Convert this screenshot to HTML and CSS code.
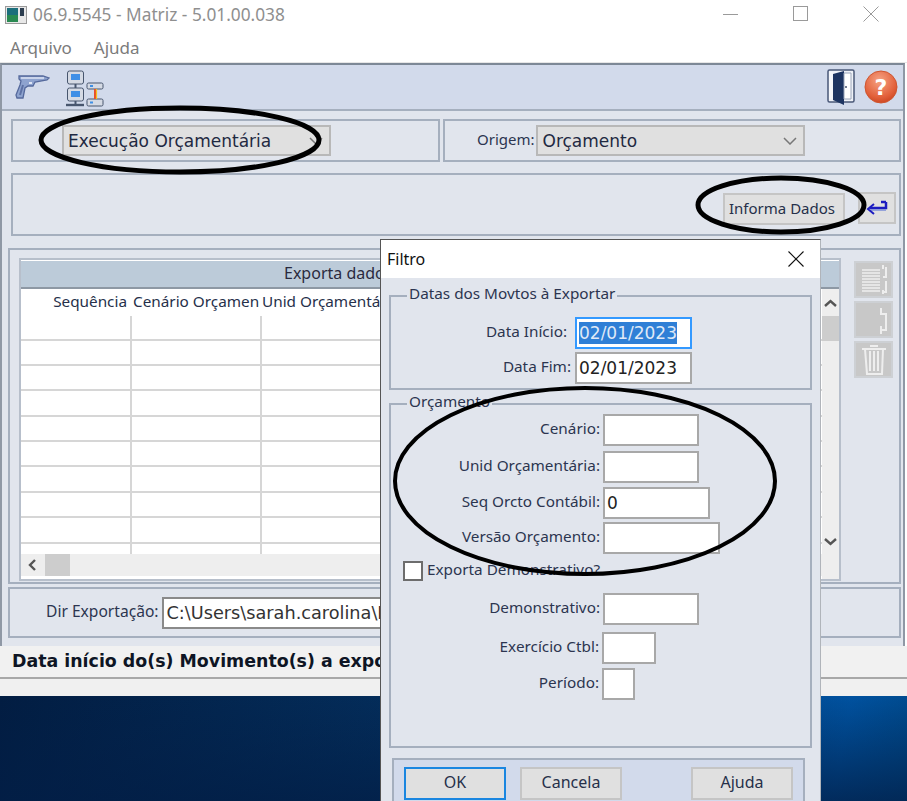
FILE: index.html
```html
<!DOCTYPE html>
<html lang="pt">
<head>
<meta charset="utf-8">
<title>Matriz</title>
<link rel="stylesheet" href="styles.css">
</head>
<body>
<div class="page">
  <header class="titlebar">
    <svg class="app-icon" width="22" height="18" viewBox="0 0 22 18"><rect x="0.5" y="0.5" width="21" height="17" fill="#e8e8e8" stroke="#9a9a9a"/><rect x="2" y="2" width="11" height="14" fill="#1c6f7c"/><rect x="2" y="9" width="11" height="7" fill="#2a8a52"/><rect x="15" y="2" width="4" height="8" fill="#2d3e50"/></svg>
    <span class="title-text">06.9.5545 - Matriz - 5.01.00.038</span>
    <div class="win-controls">
      <svg width="16" height="16" viewBox="0 0 16 16"><path d="M0 8.5H15" stroke="#9a9a9a"/></svg>
      <svg width="16" height="16" viewBox="0 0 16 16"><rect x="0.5" y="0.5" width="14" height="14" fill="none" stroke="#9a9a9a"/></svg>
      <svg width="16" height="16" viewBox="0 0 16 16"><path d="M0.5 0.5L15.5 15.5M15.5 0.5L0.5 15.5" stroke="#9a9a9a"/></svg>
    </div>
  </header>
  <nav class="menubar"><span>Arquivo</span><span>Ajuda</span></nav>

  <main class="window">
    <div class="toolbar">
      <svg width="36" height="28" viewBox="0 0 36 28"><path d="M4 3H28L34 5L32 7L20 9L18 13H13L10 15L8 25H2L1 22L5 12L6 8L4 6Z" fill="#8ea3cf" stroke="#55699c" stroke-width="1.3"/><path d="M6 5H29" stroke="#e4eaf6" stroke-width="1.4"/><path d="M5 22L8 12" stroke="#5d71a4" stroke-width="2"/><rect x="14" y="9" width="3" height="2" fill="#dfe6f5"/></svg>
      <svg class="net-icon" width="38" height="37" viewBox="0 0 38 37"><g fill="#d5dae4" stroke="#48566e"><rect x="1.5" y="1" width="16" height="13" rx="2"/><rect x="1.5" y="18" width="16" height="13" rx="2"/><rect x="21" y="13" width="16" height="6" rx="1.5"/><rect x="21" y="29" width="16" height="7" rx="1.5"/></g><rect x="5" y="4" width="9" height="6" fill="#3f8fe6"/><rect x="5" y="21" width="9" height="6" fill="#3f8fe6"/><path d="M9.5 14V18M9.5 31V34" stroke="#48566e" stroke-width="2"/><path d="M0 35H18" stroke="#48566e" stroke-width="2.4"/><path d="M29 19V29" stroke="#e8502a" stroke-width="2"/><path d="M30.5 19V29" stroke="#f5c020" stroke-width="1.2"/><path d="M24 16H27M24 32.500H27" stroke="#3f8fe6" stroke-width="2"/></svg>
      <div class="toolbar-spacer"></div>
      <svg width="29" height="37" viewBox="0 0 29 37"><rect x="1" y="1" width="26" height="32" rx="1.500" fill="#eef1f7" stroke="#4a5878" stroke-width="1.500"/><path d="M6 5L17 2V36L6 31Z" fill="#1d3461"/><path d="M17 4H24V30H17Z" fill="#fff" stroke="#9aa5ba"/><path d="M2 3H6V30H2Z" fill="#f4f6fa"/><circle cx="19" cy="18" r="1" fill="#44506a"/></svg>
      <svg class="help-icon" width="34" height="34" viewBox="0 0 34 34"><defs><radialGradient id="helpfill" cx="45%" cy="30%" r="75%"><stop offset="0" stop-color="#f6a384"/><stop offset="0.7" stop-color="#e2603a"/><stop offset="1" stop-color="#c8421f"/></radialGradient></defs><circle cx="17" cy="17" r="16" fill="url(#helpfill)" stroke="#cf5630"/><text x="17" y="25" class="help-mark" text-anchor="middle">?</text></svg>
    </div>

    <div class="content">
      <div class="row-top">
        <section class="panel panel-kind">
          <div class="combo combo-kind"><span>Execução Orçamentária</span><svg class="chev" width="14" height="8" viewBox="0 0 14 8"><path d="M1 1L7 7L13 1" fill="none" stroke="#777" stroke-width="1.500"/></svg></div>
        </section>
        <section class="panel panel-origin">
          <label class="lbl">Origem:</label>
          <div class="combo combo-origin"><span>Orçamento</span><svg class="chev" width="14" height="8" viewBox="0 0 14 8"><path d="M1 1L7 7L13 1" fill="none" stroke="#777" stroke-width="1.500"/></svg></div>
        </section>
      </div>

      <section class="panel panel-action">
        <button class="btn btn-inform">Informa Dados</button>
        <button class="btn btn-return"><svg width="22" height="16" viewBox="0 0 22 16"><path d="M20 2V8H4M20 2H15" fill="none" stroke="#1c1cc0" stroke-width="2.500"/><path d="M20 10H5" stroke="#7d8fd8" stroke-width="1.500"/><path d="M8 4L2 9L8 14" fill="none" stroke="#1c1cc0" stroke-width="2"/></svg></button>
      </section>

      <section class="panel panel-grid">
        <div class="grid-frame">
          <div class="grid-title">Exporta dados</div>
          <div class="grid-main">
            <div class="grid-cols">
              <div class="col-heads">
                <span class="head-seq">Sequência</span><span class="head-cen">Cenário Orçamen</span><span class="head-uni">Unid Orçamentária</span>
              </div>
              <div class="grid-body">
                <div class="grow"><i></i><i></i><i></i></div>
                <div class="grow"><i></i><i></i><i></i></div>
                <div class="grow"><i></i><i></i><i></i></div>
                <div class="grow"><i></i><i></i><i></i></div>
                <div class="grow"><i></i><i></i><i></i></div>
                <div class="grow"><i></i><i></i><i></i></div>
                <div class="grow"><i></i><i></i><i></i></div>
                <div class="grow"><i></i><i></i><i></i></div>
                <div class="grow"><i></i><i></i><i></i></div>
                <div class="grow grow-last"><i></i><i></i><i></i></div>
              </div>
              <div class="hscroll">
                <svg width="24" height="22" viewBox="0 0 24 22"><path d="M14 6L9 11L14 16" fill="none" stroke="#555" stroke-width="2.400"/></svg>
                <div class="hthumb"></div>
              </div>
            </div>
            <div class="vscroll">
              <svg width="17" height="27" viewBox="0 0 17 27"><path d="M3 17L8.500 12L14 17" fill="none" stroke="#555" stroke-width="2.400"/></svg>
              <div class="vthumb"></div>
              <svg class="vdown" width="17" height="14" viewBox="0 0 17 14"><path d="M3 4L8.500 9L14 4" fill="none" stroke="#555" stroke-width="2.400"/></svg>
            </div>
          </div>
        </div>
        <div class="side-btns">
          <div class="side-btn"><svg width="30" height="32" viewBox="0 0 30 32"><path d="M3 6H21M3 9H21M3 12H21M3 15H21M3 18H21M3 21H21M3 24H21M3 27H21" stroke="#eee" stroke-width="1.500"/><path d="M27 3V13H24M27 17V28H24M24 1V5M24 26V30" fill="none" stroke="#eee" stroke-width="2"/></svg></div>
          <div class="side-btn"><svg width="30" height="32" viewBox="0 0 30 32"><path d="M22 4V10H27V26H22M22 22V30" fill="none" stroke="#eee" stroke-width="2"/></svg></div>
          <div class="side-btn"><svg width="30" height="32" viewBox="0 0 30 32"><path d="M6 5H24L23 30H8Z" fill="#c8c8c8" stroke="#eee" stroke-width="2"/><path d="M11 7V27M15 7V27M19 7V27M3 5H27" stroke="#eee" stroke-width="2"/><path d="M11 2H19" stroke="#eee" stroke-width="2"/></svg></div>
        </div>
      </section>

      <section class="panel panel-dir">
        <label class="lbl lbl-dir">Dir Exportação:</label>
        <div class="field field-dir">C:\Users\sarah.carolina\Desktop</div>
      </section>
    </div>
  </main>

  <div class="statusbar">Data início do(s) Movimento(s) a exportar</div>
  <div class="strip"></div>
  <div class="desktop"></div>

  <aside class="dialog">
    <div class="dlg-title">
      <span>Filtro</span>
      <svg width="16" height="16" viewBox="0 0 16 16"><path d="M0.500 0.500L15.500 15.500M15.500 0.500L0.500 15.500" stroke="#111" stroke-width="1.100"/></svg>
    </div>
    <div class="dlg-body">
      <fieldset class="group group-dates">
        <legend>Datas dos Movtos à Exportar</legend>
        <div class="frow frow-start"><label class="lbl l-start">Data Início:</label><div class="field f-date f-focus"><span class="sel">02/01/2023</span></div></div>
        <div class="frow frow-end"><label class="lbl l-end">Data Fim:</label><div class="field f-date">02/01/2023</div></div>
      </fieldset>
      <fieldset class="group group-budget">
        <legend>Orçamento</legend>
        <div class="frow r-cen"><label class="lbl l-w">Cenário:</label><div class="field f-96"></div></div>
        <div class="frow r-uni"><label class="lbl l-w">Unid Orçamentária:</label><div class="field f-96"></div></div>
        <div class="frow r-seq"><label class="lbl l-w">Seq Orcto Contábil:</label><div class="field f-107">0</div></div>
        <div class="frow r-ver"><label class="lbl l-w">Versão Orçamento:</label><div class="field f-117"></div></div>
        <div class="frow r-chk"><span class="check"></span><label class="lbl">Exporta Demonstrativo?</label></div>
        <div class="frow r-dem"><label class="lbl l-w">Demonstrativo:</label><div class="field f-96"></div></div>
        <div class="frow r-exe"><label class="lbl l-x">Exercício Ctbl:</label><div class="field f-54"></div></div>
        <div class="frow r-per"><label class="lbl l-x">Período:</label><div class="field f-33"></div></div>
      </fieldset>
      <div class="dlg-actions">
        <button class="btn dlg-btn dlg-ok">OK</button>
        <button class="btn dlg-btn">Cancela</button>
        <button class="btn dlg-btn dlg-help">Ajuda</button>
      </div>
    </div>
  </aside>

  <svg class="marks" width="907" height="801" viewBox="0 0 907 801">
    <ellipse class="mark-bold" cx="180" cy="140" rx="139" ry="32"/>
    <ellipse class="mark-bold" cx="781" cy="205" rx="83" ry="27"/>
    <ellipse cx="585" cy="481" rx="190" ry="93"/>
  </svg>
</div>
</body>
</html>
```

FILE: styles.css
```css
* { box-sizing: border-box; }
html, body { margin: 0; padding: 0; height: 801px; overflow: hidden; background: #fff; }
body { font-family: "Noto Sans", "Open Sans", sans-serif; font-size: 15px; color: #26304a; }

.page { position: relative; width: 907px; height: 801px; overflow: hidden; display: flex; flex-direction: column; }

.titlebar { height: 31px; display: flex; align-items: center; padding-left: 5px; background: #fff; flex: none; }
.app-icon { margin-right: 6px; margin-top: -2px; }
.title-text { font-size: 17.300px; color: #8f8f8f; margin-top: -2px; }
.win-controls { margin-left: auto; display: flex; gap: 54px; padding-right: 28px; margin-top: -3px; }

.menubar { height: 32px; background: #fff; display: flex; gap: 22px; padding: 4px 0 0 10px; font-size: 17px; color: #7b7b7b; flex: none; line-height: 26px; border-bottom: 1px solid #e6e6e6; }

.window { width: 905px; height: 583px; border-top: 2px solid #7d8896; border-left: 2px solid #8f98a5; border-right: 2px solid #8f98a5; background: #e1e5ed; flex: none; display: flex; flex-direction: column; }

.toolbar { height: 46px; flex: none; background: #d2daeb; border-bottom: 2px solid #a5afbe; display: flex; align-items: center; padding: 0 5px 0 13px; }
.net-icon { margin-left: 15px; margin-top: 3px; }
.toolbar-spacer { flex: 1; }
.help-icon { margin-left: 8px; }
.help-mark { font-family: "DejaVu Sans", sans-serif; font-weight: 700; font-size: 22px; fill: #fff; }

.content { flex: 1; padding: 8px 2px 0 6px; display: flex; flex-direction: column; }

.panel { border: 2px solid #a5afbe; background: #e1e5ed; }
.row-top { display: flex; gap: 3px; margin: 0 0 0 3px; height: 43px; flex: none; }
.panel-kind { width: 429px; display: flex; align-items: center; padding-left: 49px; }
.panel-origin { flex: 1; display: flex; align-items: center; padding-left: 32px; gap: 1px; }

.combo { height: 31px; width: 269px; background: #e0e0e0; border: 2px solid #b8b8b8; display: flex; align-items: center; justify-content: space-between; padding: 0 6px 0 4px; font-family: "DejaVu Sans", sans-serif; font-size: 17px; color: #1f2942; }
.combo-origin { padding-left: 5px; }
.lbl { font-size: 15.300px; padding-bottom: 4px; color: #2c3550; white-space: nowrap; }
.panel-origin .lbl { font-size: 15px; }
.lbl-dir { font-size: 15.600px; }

.panel-action { margin: 11px 0 0 3px; height: 63px; flex: none; display: flex; align-items: flex-start; padding: 17px 3px 0 0; justify-content: flex-end; gap: 13px; }
.btn { background: #e0e0e0; border: 2px solid #c5c5c5; font-family: "Noto Sans", sans-serif; font-size: 15px; color: #26304a; padding: 0 0 3px; }
.btn-inform { width: 122px; height: 32px; margin-top: 1px; padding: 0 4px 2px 0; }
.btn-return { width: 38px; height: 32px; display: flex; align-items: center; justify-content: center; padding: 0; }

.panel-grid { margin-top: 12px; height: 336px; flex: none; display: flex; padding: 8px 4px 0 9px; gap: 13px; }
.grid-frame { width: 822px; height: 323px; border: 2px solid #b7bfcb; flex: none; display: flex; flex-direction: column; background: #fff; }
.grid-title { height: 28px; background: #bccbd9; border-bottom: 2px solid #8d98a4; padding-left: 263px; font-size: 16px; line-height: 24px; color: #2a2a3e; flex: none; margin: 1px 0 0 0; white-space: nowrap; }
.grid-main { flex: 1; display: flex; min-height: 0; }
.grid-cols { flex: 1; display: flex; flex-direction: column; min-width: 0; }
.col-heads { height: 27px; display: grid; grid-template-columns: 111px 130px 1fr; line-height: 24px; flex: none; font-size: 15.300px; white-space: nowrap; overflow: hidden; }
.head-seq { text-align: right; padding-right: 5px; }
.head-cen { padding-left: 1px; overflow: hidden; }
.head-uni { padding-left: 0; }
.grid-body { flex: 1; overflow: hidden; }
.grow { display: grid; grid-template-columns: 111px 130px 1fr; height: 25.4px; border-bottom: 2px solid #d6d6d6; }
.grow:first-child { height: 24.5px; }
.grow i { border-right: 2px solid #d6d6d6; }
.grow i:last-child { border-right: 0; }
.grow-last { border-bottom: 0; height: 10px; }
.hscroll { height: 22px; flex: none; background: #eeeeee; display: flex; margin-bottom: 3px; }
.hthumb { width: 25px; background: #cdcdcd; }
.vscroll { width: 17px; flex: none; background: #eeeeee; display: flex; flex-direction: column; }
.vthumb { height: 25px; background: #cdcdcd; }
.vdown { margin-top: 194px; }

.side-btns { display: flex; flex-direction: column; gap: 3px; padding-top: 3px; }
.side-btn { width: 39px; height: 37px; background: #c8c8c8; border: 2px solid #cdd0d4; display: flex; align-items: center; justify-content: center; }

.panel-dir { margin-top: 3px; height: 51px; flex: none; display: flex; align-items: center; padding-left: 36px; gap: 3px; }
.field { height: 32px; background: #fff; border: 2px solid #a8a8a8; font-family: "DejaVu Sans", sans-serif; font-size: 17px; line-height: 28px; padding: 0 2px; color: #222; white-space: nowrap; overflow: hidden; }
.field-dir { width: 300px; border-color: #8a8a8a; padding-left: 3px; font-size: 17.700px; color: #333; }

.statusbar { height: 33px; flex: none; background: #f1f1f1; border-bottom: 2px solid #a8a8a8; font-family: "DejaVu Sans", sans-serif; font-weight: 700; font-size: 17.400px; line-height: 30px; padding-left: 12px; color: #0e1524; white-space: nowrap; }
.strip { height: 17px; flex: none; background: #f0f0f0; }
.desktop { flex: 1; background: linear-gradient(180deg, rgba(2, 30, 70, 0) 0%, rgba(2, 30, 70, 0.75) 100%), linear-gradient(100deg, #021d42 0%, #04305f 50%, #0052a0 92%, #004a8c 100%); }

.dialog { position: absolute; left: 380px; top: 239px; width: 441px; height: 580px; background: #e1e5ed; border: 1px solid #555; border-bottom: 0; border-right-color: #b0b4ba; display: flex; flex-direction: column; }
.dlg-title { height: 38px; background: #fff; flex: none; display: flex; align-items: center; justify-content: space-between; padding: 0 16px 0 6px; font-size: 16px; color: #111; }
.dlg-body { flex: 1; padding: 17px 8px 0 8px; display: flex; flex-direction: column; }

.group { margin: 0; padding: 0; border: 2px solid #a5afbe; position: relative; min-width: 0; }
.group legend { position: absolute; left: 16px; top: -13px; background: #e1e5ed; padding: 0 2px; font-size: 15.300px; line-height: 18px; color: #2c3550; white-space: nowrap; }
.group-dates { height: 95px; width: 423px; padding-top: 20px; flex: none; }
.group-budget { height: 345px; width: 423px; margin-top: 13px; padding-top: 9px; flex: none; }

.frow { display: flex; align-items: center; gap: 3px; }
.frow-start { gap: 8px; }
.frow-end { margin-top: 3px; gap: 4px; }
.l-start { width: 176px; text-align: right; }
.l-end { width: 180px; text-align: right; }
.f-date { width: 117px; }
.f-focus { border-color: #3399ff; }
.sel { background: #2f7fd6; color: #dfe9f7; display: inline-block; line-height: 22px; vertical-align: middle; margin-top: -2px; }

.l-w { width: 209px; text-align: right; }
.l-x { width: 208px; text-align: right; }
.r-uni { margin-top: 5px; }
.r-seq { margin-top: 4px; }
.r-ver { margin-top: 3px; }
.r-chk { margin-top: 7px; padding-left: 12px; gap: 4px; height: 20px; }
.r-dem { margin-top: 12px; }
.r-exe { margin-top: 7px; }
.r-per { margin-top: 4px; }
.f-96 { width: 96px; }
.f-107 { width: 107px; }
.f-117 { width: 117px; }
.f-54 { width: 54px; }
.f-33 { width: 33px; }
.check { width: 20px; height: 20px; background: #fff; border: 2px solid #6d6d6d; flex: none; }

.dlg-actions { margin: 10px 0 0 3px; width: 413px; height: 60px; border: 2px solid #a5afbe; background: #d2daeb; display: flex; padding: 7px 10px 0 10px; gap: 14px; flex: none; }
.dlg-btn { width: 102px; height: 33px; font-size: 16px; }
.dlg-ok { border-color: #1a86e0; }
.dlg-help { margin-left: auto; }

.marks { position: absolute; left: 0; top: 0; pointer-events: none; }
.marks ellipse { fill: none; stroke: #000; stroke-width: 4; }
.marks .mark-bold { stroke-width: 5; }
```
